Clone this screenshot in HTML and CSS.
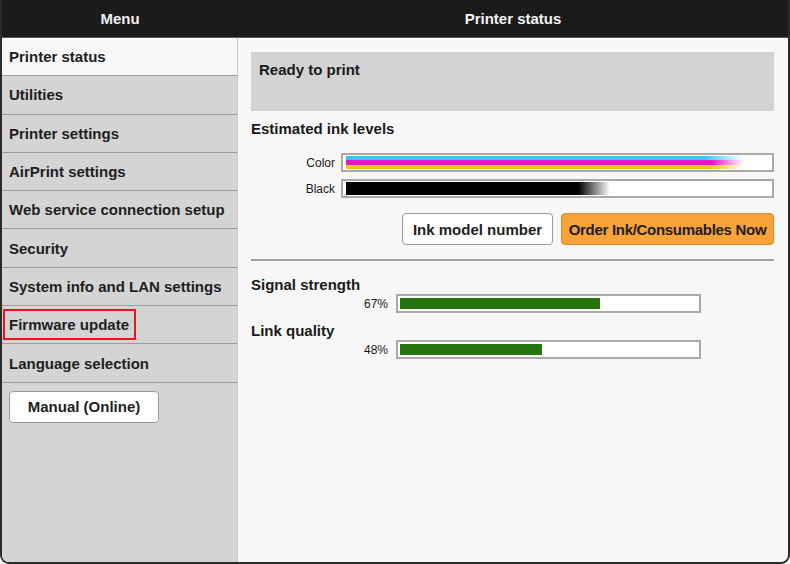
FILE: index.html
```html
<!DOCTYPE html>
<html>
<head>
<meta charset="utf-8">
<link rel="stylesheet" href="styles.css">
</head>
<body>
<div class="frame">
  <div class="header">
    <div class="h-menu">Menu</div>
    <div class="h-title">Printer status</div>
  </div>
  <div class="main">
    <div class="sidebar">
      <div class="nav-item active"><span>Printer status</span></div>
      <div class="nav-item"><span>Utilities</span></div>
      <div class="nav-item"><span>Printer settings</span></div>
      <div class="nav-item"><span>AirPrint settings</span></div>
      <div class="nav-item"><span>Web service connection setup</span></div>
      <div class="nav-item"><span>Security</span></div>
      <div class="nav-item"><span>System info and LAN settings</span></div>
      <div class="nav-item"><span class="highlight">Firmware update</span></div>
      <div class="nav-item"><span>Language selection</span></div>
      <div class="side-btn-wrap"><button class="btn btn-manual">Manual (Online)</button></div>
    </div>
    <div class="content">
      <div class="status-box">Ready to print</div>
      <div class="heading ink-heading">Estimated ink levels</div>
      <div class="ink-row">
        <div class="ink-label">Color</div>
        <div class="ink-bar">
          <div class="color-fill" style="width:398px">
            <div class="stripe cyan"></div>
            <div class="stripe magenta"></div>
            <div class="stripe yellow"></div>
          </div>
        </div>
      </div>
      <div class="ink-row">
        <div class="ink-label">Black</div>
        <div class="ink-bar">
          <div class="black-fill" style="width:264px"></div>
        </div>
      </div>
      <div class="btn-row">
        <button class="btn btn-white">Ink model number</button>
        <button class="btn btn-orange">Order Ink/Consumables Now</button>
      </div>
      <div class="rule"></div>
      <div class="heading sig-heading">Signal strength</div>
      <div class="sig-row">
        <div class="sig-label">67%</div>
        <div class="sig-bar"><div class="sig-fill" style="width:200px"></div></div>
      </div>
      <div class="heading sig-heading">Link quality</div>
      <div class="sig-row">
        <div class="sig-label">48%</div>
        <div class="sig-bar"><div class="sig-fill" style="width:142px"></div></div>
      </div>
    </div>
  </div>
</div>
</body>
</html>
```
FILE: styles.css
```css
* { box-sizing: border-box; }
html, body { margin: 0; padding: 0; }
body {
  width: 790px;
  height: 564px;
  font-family: "Liberation Sans", Arial, sans-serif;
  color: #1a1a1a;
  background: #ffffff;
}
.frame {
  width: 790px;
  height: 564px;
  border: 2px solid #2b2b2b;
  border-top: none;
  border-radius: 0 0 9px 9px;
  overflow: hidden;
  display: flex;
  flex-direction: column;
  background: #f7f7f7;
}
.header {
  height: 38px;
  background: #1b1b1b;
  border-bottom: 1px solid #5a5a5a;
  display: flex;
  color: #f2f2f2;
  font-weight: bold;
  font-size: 15px;
}
.h-menu {
  width: 236px;
  display: flex;
  align-items: center;
  justify-content: center;
  padding-bottom: 1px;
}
.h-title {
  flex: 1;
  display: flex;
  align-items: center;
  justify-content: center;
  padding-bottom: 1px;
}
.main {
  flex: 1;
  display: flex;
}
.sidebar {
  width: 236px;
  background: #d4d4d4;
  border-right: 1px solid #c8c8c8;
  display: flex;
  flex-direction: column;
}
.nav-item {
  height: 38.3px;
  border-bottom: 1px solid #9d9d9d;
  display: flex;
  align-items: center;
  padding-left: 6px;
  font-weight: bold;
  font-size: 15px;
  color: #1e1e1e;
}
.nav-item.active {
  background: #f8f8f8;
}
.nav-item span {
  padding: 0 1px;
}
.nav-item .highlight {
  border: 2px solid #e8141b;
  padding: 5px 5px 5px 4px;
  margin-left: -5px;
}
.side-btn-wrap {
  padding: 8px 0 0 7px;
}
.btn {
  font-family: "Liberation Sans", Arial, sans-serif;
  font-weight: bold;
  font-size: 15px;
  color: #1e1e1e;
  height: 32px;
  border-radius: 4px;
  border: 1px solid #9a9a9a;
  padding: 0;
  white-space: nowrap;
  cursor: pointer;
}
.btn-manual {
  width: 150px;
  height: 32px;
  background: #ffffff;
}
.content {
  flex: 1;
  padding: 14px 14px 0 13px;
  display: flex;
  flex-direction: column;
}
.status-box {
  height: 59px;
  background: #d3d3d3;
  padding: 9px 8px;
  font-weight: bold;
  font-size: 15px;
}
.heading {
  font-weight: bold;
  font-size: 15px;
  line-height: 18px;
}
.ink-heading {
  margin-top: 9px;
  margin-bottom: 15px;
}
.ink-row {
  display: flex;
  align-items: center;
  margin-bottom: 7px;
}
.ink-label {
  width: 84px;
  text-align: right;
  font-size: 12px;
  margin-right: 6px;
}
.ink-bar {
  flex: 1;
  height: 19px;
  background: #ffffff;
  border: 2px solid #a9a9a9;
  padding: 1px 3px;
}
.color-fill {
  height: 100%;
  display: flex;
  flex-direction: column;
}
.stripe { flex: 1; }
.cyan { background: linear-gradient(to right, #2ec9f2 90%, rgba(46,201,242,0)); }
.magenta { background: linear-gradient(to right, #e814c8 92%, rgba(232,20,200,0)); }
.yellow { background: linear-gradient(to right, #f6c60a 92%, rgba(246,198,10,0)); }
.black-fill {
  height: 100%;
  background: linear-gradient(to right, #000 88%, rgba(0,0,0,0));
}
.btn-row {
  display: flex;
  justify-content: flex-end;
  gap: 8px;
  margin-top: 8px;
}
.btn-white {
  width: 151px;
  background: #ffffff;
}
.btn-orange {
  width: 213px;
  background: #f8a23a;
  border-color: #d98a2a;
  letter-spacing: -0.3px;
}
.rule {
  margin-top: 14px;
  height: 2px;
  background: #a0a0a0;
  margin-bottom: 15px;
}
.sig-heading {
  margin-bottom: 0;
}
.sig-row {
  display: flex;
  align-items: center;
  margin-bottom: 9px;
}
.sig-label {
  width: 137px;
  text-align: right;
  font-size: 12px;
  margin-right: 8px;
}
.sig-bar {
  width: 305px;
  height: 19px;
  background: #ffffff;
  border: 2px solid #a9a9a9;
  padding: 2px 2px;
}
.sig-fill {
  height: 100%;
  background: #267410;
}
```
